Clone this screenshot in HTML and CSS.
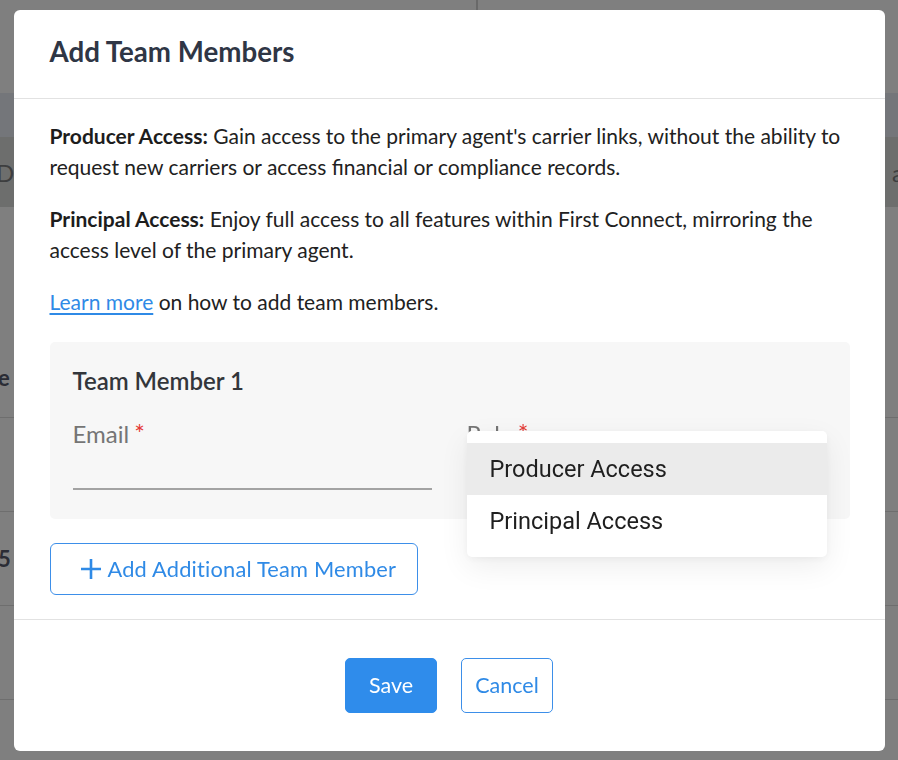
FILE: index.html
```html
<!DOCTYPE html>
<html lang="en">
<head>
<meta charset="utf-8">
<title>Add Team Members</title>
<link rel="stylesheet" href="styles.css">
</head>
<body>
<div class="page">
  <div class="topbar"><div class="topcol"></div><div class="topcol"></div></div>
  <div class="subbar"></div>
  <div class="thead"><span class="th-left">Da</span><span class="th-right">a</span></div>
  <div class="trow tall"><span class="cell-left bold">e</span></div>
  <div class="trow"></div>
  <div class="trow"><span class="cell-left bold">5</span></div>
  <div class="trow"></div>
  <div class="trow"></div>
</div>

<div class="backdrop">
  <div class="modal" role="dialog" aria-labelledby="modal-title">
    <header class="modal-header">
      <h2 id="modal-title">Add Team Members</h2>
    </header>
    <div class="modal-body">
      <p><b>Producer Access:</b> Gain access to the primary agent's carrier links, without the ability to request new carriers or access financial or compliance records.</p>
      <p><b>Principal Access:</b> Enjoy full access to all features within First Connect, mirroring the access level of the primary agent.</p>
      <p><a href="#" class="link">Learn more</a> on how to add team members.</p>

      <section class="member-card">
        <h3>Team Member 1</h3>
        <div class="fields">
          <div class="field">
            <label class="field-label">Email<span class="req">*</span></label>
            <div class="input-line"></div>
          </div>
          <div class="field">
            <label class="field-label">Role<span class="req">*</span></label>
            <div class="input-line"></div>
            <ul class="menu">
              <li class="menu-item active">Producer Access</li>
              <li class="menu-item">Principal Access</li>
            </ul>
          </div>
        </div>
      </section>

      <button class="add-btn" type="button">
        <svg class="plus" width="22" height="22" viewBox="0 0 22 22" aria-hidden="true"><path d="M11 1v20M1 11h20" stroke="currentColor" stroke-width="2.6" fill="none"/></svg>
        <span>Add Additional Team Member</span>
      </button>
    </div>
    <footer class="modal-footer">
      <button class="btn btn-primary" type="button">Save</button>
      <button class="btn btn-outline" type="button">Cancel</button>
    </footer>
  </div>
</div>
</body>
</html>
```

FILE: styles.css
```css
* { box-sizing: border-box; }

html, body {
  margin: 0;
  padding: 0;
  width: 898px;
  height: 760px;
  overflow: hidden;
  background: #ffffff;
  font-family: "Lato", "Open Sans", sans-serif;
}

/* ---------- underlying page ---------- */
.page {
  width: 898px;
}
.topbar {
  height: 93px;
  display: grid;
  grid-template-columns: 478px 1fr;
}
.topcol:first-child { border-right: 2px solid #d2d2d2; }
.subbar {
  height: 44px;
  background: #e9edf5;
}
.thead {
  height: 70px;
  background: #dadcdb;
  display: flex;
  justify-content: space-between;
  align-items: center;
  font-size: 24px;
  color: #7a7c7e;
}
.th-left { margin-left: -4px; }
.th-right { margin-right: -6px; }
.trow {
  height: 94px;
  border-bottom: 1px solid #dcdcdc;
  display: flex;
  align-items: center;
}
.trow.tall {
  height: 211px;
  align-items: flex-end;
  padding-bottom: 26px;
}
.cell-left {
  margin-left: -2px;
  font-size: 22px;
  color: #55586a;
}
.bold { font-weight: 700; }

/* ---------- overlay ---------- */
.backdrop {
  position: fixed;
  inset: 0;
  background: rgba(0, 0, 0, 0.5);
  display: flex;
  align-items: center;
  justify-content: center;
}

.modal {
  width: 871px;
  background: #ffffff;
  border-radius: 6px;
  display: flex;
  flex-direction: column;
}

.modal-header {
  height: 89px;
  padding: 0 36px;
  display: flex;
  align-items: center;
  border-bottom: 1px solid #e2e2e2;
}
.modal-header h2 {
  margin: 0;
  font-size: 27.7px;
  font-weight: 700;
  color: #2f3645;
  padding-bottom: 4px;
}

.modal-body {
  padding: 21px 35px 24px 36px;
  border-bottom: 1px solid #e2e2e2;
  color: #212121;
}
.modal-body p {
  margin: 0 0 21px;
  font-size: 21px;
  line-height: 31px;
}
.modal-body b { font-weight: 700; color: #1d1d1d; }
.link {
  color: #2f8ae6;
  text-decoration: underline;
  text-underline-offset: 3px;
}

.member-card {
  margin-top: 25px;
  background: #f7f7f7;
  border-radius: 5px;
  padding: 24px 23px 29px;
}
.member-card h3 {
  margin: 0 0 22px;
  font-size: 24px;
  line-height: 30px;
  font-weight: 600;
  color: #33363b;
}
.fields {
  display: grid;
  grid-template-columns: 359px 360px;
  column-gap: 35px;
}
.field {
  position: relative;
}
.field-label {
  display: block;
  font-size: 24px;
  line-height: 30px;
  color: #757575;
  height: 70px;
}
.req {
  color: #e53935;
  margin-left: 5px;
  font-size: 25px;
}
.input-line {
  height: 2px;
  background: #a3a3a3;
}

.menu {
  position: absolute;
  top: 13px;
  left: 0;
  width: 360px;
  margin: 0;
  padding: 12px 0 10px;
  list-style: none;
  background: #ffffff;
  border-radius: 5px;
  box-shadow: 0 10px 30px rgba(0, 0, 0, 0.07), 0 2px 8px rgba(0, 0, 0, 0.05);
}
.menu-item {
  height: 52px;
  line-height: 52px;
  padding-left: 23px;
  font-family: "Roboto", sans-serif;
  font-size: 23.5px;
  color: #1f1f1f;
}
.menu-item.active { background: #ebebeb; }

.add-btn {
  margin-top: 24px;
  width: 368px;
  height: 52px;
  background: #ffffff;
  border: 1.5px solid #3d8fe9;
  border-radius: 6px;
  display: flex;
  align-items: center;
  gap: 6px;
  padding: 0 0 0 29px;
  font-family: inherit;
  font-size: 21.8px;
  color: #2f8ae6;
  letter-spacing: 0.2px;
  cursor: pointer;
}
.plus { flex: none; }

.modal-footer {
  padding: 38px 0 38px;
  display: flex;
  justify-content: center;
  gap: 24px;
}
.btn {
  height: 55px;
  min-width: 92px;
  padding: 0 12px;
  border-radius: 5px;
  font-family: inherit;
  font-size: 21.5px;
  cursor: pointer;
}
.btn-primary {
  background: #2f8ceb;
  border: 1px solid #2f8ceb;
  color: #ffffff;
}
.btn-outline {
  background: #ffffff;
  border: 1.5px solid #3d8fe9;
  color: #2f8ae6;
}
```
